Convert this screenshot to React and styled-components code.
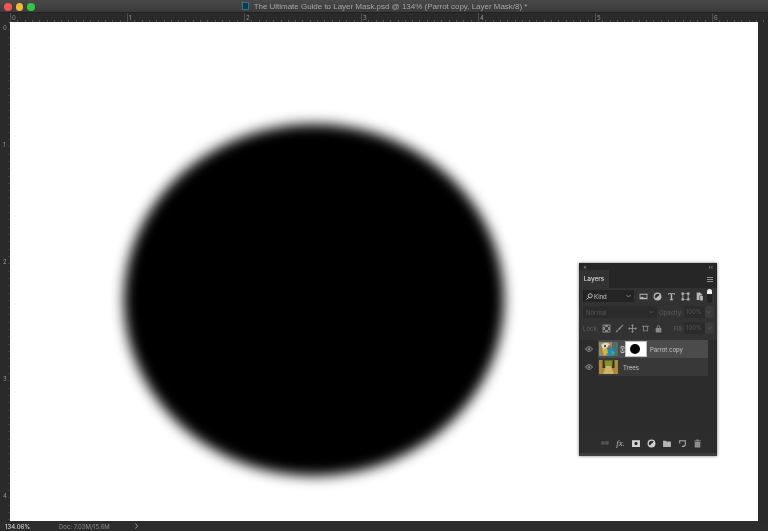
import React from "react";
import styled, { createGlobalStyle } from "styled-components";

const Global = createGlobalStyle`
  html, body { margin: 0; padding: 0; background: #262626; }
  body { font-family: "Inter", "Liberation Sans", sans-serif; overflow: hidden; }
  * { box-sizing: border-box; }
`;

const Window = styled.div`
  width: 768px;
  height: 531px;
  display: flex;
  flex-direction: column;
  background: #2a2a2a;
  filter: blur(0.45px);
  overflow: hidden;
`;

const TitleBar = styled.div`
  height: 13px;
  flex: none;
  position: relative;
  display: flex;
  align-items: center;
  justify-content: center;
  background: linear-gradient(#484848, #3a3a3a);
  border-bottom: 1px solid #222;
`;

const Lights = styled.div`
  position: absolute;
  left: 4px;
  top: 3px;
  display: flex;
  gap: 4px;
`;

const Light = styled.span`
  width: 7.5px;
  height: 7.5px;
  border-radius: 50%;
  background: ${(p) => p.$c};
`;

const Title = styled.div`
  display: flex;
  align-items: center;
  gap: 5px;
  margin-left: 1px;
  font-family: "Liberation Sans", sans-serif;
  font-size: 8px;
  letter-spacing: -0.02px;
  color: #a6a6a6;
  white-space: nowrap;
`;

const HRuler = styled.div`
  height: 9px;
  flex: none;
  display: flex;
  padding-left: 10px;
  background: #2a2a2a;
  overflow: hidden;
`;

const HSegment = styled.div`
  flex: none;
  width: 117px;
  height: 9px;
  padding: 1px 0 0 2px;
  font-size: 6px;
  line-height: 7px;
  color: #929292;
  background:
    linear-gradient(#4e4e4e, #4e4e4e) left bottom / 1px 9px no-repeat,
    repeating-linear-gradient(90deg, #555 0 1px, transparent 1px 7.31px) left bottom / 100% 2px no-repeat;
`;

const Middle = styled.div`
  flex: 1;
  min-height: 0;
  display: flex;
`;

const VRuler = styled.div`
  width: 10px;
  flex: none;
  display: flex;
  flex-direction: column;
  background: #2a2a2a;
  overflow: hidden;
`;

const VSegment = styled.div`
  flex: none;
  height: 117px;
  padding: 2px 0 0 3px;
  font-size: 6px;
  line-height: 7px;
  color: #929292;
  background: repeating-linear-gradient(180deg, #444 0 1px, transparent 1px 7.31px) right top / 2px 100% no-repeat;
`;

const Canvas = styled.div`
  position: relative;
  flex: 1;
  background: #ffffff;
  overflow: hidden;
`;

const Gutter = styled.div`
  width: 10px;
  flex: none;
  background: #2a2a2a;
`;

const Blob = styled.div`
  position: absolute;
  left: 114px;
  top: 102px;
  width: 380px;
  height: 352px;
  border-radius: 50%;
  background: #000;
  filter: blur(6.5px);
`;

const StatusBar = styled.div`
  height: 10px;
  flex: none;
  display: flex;
  align-items: center;
  padding-left: 5px;
  background: #2c2c2c;
  font-size: 6px;
  color: #8e8e8e;
`;

const Zoom = styled.span`
  width: 54px;
  font-weight: 500;
  color: #d4d4d4;
`;

const Doc = styled.span`
  width: 76px;
`;

const Panel = styled.div`
  position: absolute;
  left: 569px;
  top: 241px;
  width: 138px;
  height: 193px;
  display: flex;
  flex-direction: column;
  background: #323232;
  box-shadow: 0 0 3px rgba(0, 0, 0, 0.55);
`;

const PanelTop = styled.div`
  height: 7px;
  flex: none;
  display: flex;
  align-items: center;
  justify-content: space-between;
  padding: 0 4px;
  background: #262626;
  color: #9a9a9a;
  font-size: 6px;
  line-height: 7px;
`;

const TabBar = styled.div`
  height: 18px;
  flex: none;
  display: flex;
  align-items: center;
  justify-content: space-between;
  padding-right: 4px;
  background: #262626;
`;

const Tab = styled.div`
  width: 30px;
  height: 18px;
  display: flex;
  align-items: center;
  justify-content: center;
  background: #323232;
  color: #d6d6d6;
  font-size: 6.500px;
  font-weight: 500;
`;

const MenuBars = styled.div`
  width: 6px;
  height: 5px;
  background: repeating-linear-gradient(#8a8a8a 0 1px, transparent 1px 2px);
`;

const Row = styled.div`
  height: 16px;
  flex: none;
  display: flex;
  align-items: center;
  padding: 0 3px 0 4px;
  color: #5a5a5a;
  font-size: 6px;
`;

const Select = styled.div`
  height: 12px;
  width: ${(p) => p.$w}px;
  flex: none;
  display: flex;
  align-items: center;
  justify-content: space-between;
  padding: 0 3px;
  background: ${(p) => (p.$dim ? "#2b2b2b" : "#242424")};
  color: ${(p) => (p.$dim ? "#555555" : "#c4c4c4")};
  font-size: 6px;
`;

const KindLabel = styled.span`
  display: flex;
  align-items: center;
  gap: 1px;
`;

const FilterIcons = styled.div`
  display: flex;
  align-items: center;
  gap: 5px;
  margin-left: 5px;
`;

const Knob = styled.div`
  width: 5px;
  height: 14px;
  margin-left: 3px;
  border-radius: 3px;
  background: linear-gradient(#f0f0f0 0 5px, #242424 5px);
`;

const Field = styled.div`
  height: 12px;
  width: ${(p) => p.$w}px;
  margin-left: ${(p) => p.$ml || 0}px;
  flex: none;
  padding-left: 2px;
  line-height: 12px;
  background: #2b2b2b;
  color: #555555;
  font-size: 6px;
`;

const Spin = styled.div`
  height: 12px;
  width: 8px;
  flex: none;
  display: flex;
  align-items: center;
  justify-content: center;
  background: #3c3c3c;
`;

const Label = styled.span`
  margin-left: ${(p) => p.$ml || 0}px;
  color: #5e5e5e;
`;

const LockIcons = styled.div`
  display: flex;
  align-items: center;
  gap: 4px;
  margin-left: 4px;
`;

const List = styled.div`
  flex: 1;
  min-height: 0;
  display: flex;
  flex-direction: column;
  margin-top: 4px;
  background: #2c2c2c;
`;

const LayerRow = styled.div`
  height: 18px;
  flex: none;
  display: flex;
  align-items: center;
`;

const EyeCell = styled.div`
  width: 19px;
  flex: none;
  display: flex;
  align-items: center;
  justify-content: center;
`;

const LayerBody = styled.div`
  width: 110px;
  height: 18px;
  display: flex;
  align-items: center;
  padding-left: 1px;
  background: ${(p) => (p.$active ? "#4b4b4b" : "#383838")};
  color: #c6c6c6;
  font-size: 6px;
`;

const Thumb = styled.svg`
  width: 19px;
  height: 14px;
  flex: none;
`;

const Link = styled.svg`
  width: 5px;
  height: 9px;
  flex: none;
  margin: 0 1px 0 2px;
`;

const MaskThumb = styled.div`
  width: 20px;
  height: 14px;
  flex: none;
  display: flex;
  align-items: center;
  justify-content: center;
  background: #fff;
  outline: 1px solid #bdbdbd;
`;

const MaskDot = styled.div`
  width: 10px;
  height: 10px;
  margin-left: -3px;
  border-radius: 50%;
  background: #000;
`;

const LayerName = styled.span`
  margin-left: ${(p) => p.$ml}px;
  white-space: nowrap;
`;

const Footer = styled.div`
  height: 20px;
  flex: none;
  display: flex;
  align-items: center;
  justify-content: flex-end;
  gap: 6px;
  padding-right: 15px;
  background: #2d2d2d;
`;

const Fx = styled.span`
  font-family: "Liberation Serif", serif;
  font-style: italic;
  font-size: 9px;
  color: #bcbcbc;
`;

const PanelBase = styled.div`
  height: 3px;
  flex: none;
  background: #3c3c3c;
`;

const Ico = ({ children, w = 9, h = 9, c = "#b8b8b8" }) => (
  <svg width={w} height={h} viewBox="0 0 16 16" fill={c} stroke="none" style={{ flex: "none" }}>
    {children}
  </svg>
);

const Chevron = ({ c = "#a0a0a0" }) => (
  <svg width="5" height="4" viewBox="0 0 10 8" fill="none" stroke={c} strokeWidth="1.6">
    <path d="M1 2l4 4 4-4" />
  </svg>
);

const Eye = () => (
  <svg width="8" height="6" viewBox="0 0 16 12" fill="none" stroke="#a8a8a8" strokeWidth="1.6">
    <path d="M1 6c2-3 4.500-4.500 7-4.500S13 3 15 6c-2 3-4.500 4.500-7 4.500S3 9 1 6z" />
    <circle cx="8" cy="6" r="1.800" />
  </svg>
);

const ParrotThumb = () => (
  <Thumb viewBox="0 0 19 14">
    <rect width="19" height="14" fill="#8f8a6a" />
    <rect x="13" width="6" height="14" fill="#4f6f6a" />
    <path d="M2 3c3-3 7-3 9 0l-1 4-6 0z" fill="#e6dcb0" />
    <path d="M7 6c3-2 7-1 8 3 0 3-2 5-5 5-3-1-4-4-3-8z" fill="#1c8cc8" />
    <path d="M3 7l5-1 1 5-4 3z" fill="#e2b02c" />
    <path d="M9 3l3 1-2 3z" fill="#d8442c" />
    <path d="M12 9l4 1-2 4z" fill="#3ab57c" />
    <circle cx="6" cy="4" r="1" fill="#222" />
  </Thumb>
);

const TreesThumb = () => (
  <Thumb viewBox="0 0 19 14">
    <rect width="19" height="14" fill="#a8853a" />
    <path d="M2 0h15v8H2z" fill="#5f6a28" />
    <path d="M6 1h7v6H6z" fill="#86913c" />
    <path d="M7 6h5l3 8H4z" fill="#cdb268" />
    <path d="M0 0h3v14H0zM16 0h3v14h-3z" fill="#b08a3c" />
    <path d="M4 0h1l1 8H4zM14 0h1v8h-2z" fill="#3d3214" />
  </Thumb>
);

const HLABELS = ["0", "1", "2", "3", "4", "5", "6"];
const VLABELS = ["0", "1", "2", "3", "4"];

export default function App() {
  return (
    <>
      <Global />
      <Window>
        <TitleBar>
          <Lights>
            <Light $c="#f1564e" />
            <Light $c="#f5b82e" />
            <Light $c="#2fc840" />
          </Lights>
          <Title>
            <svg width="7" height="8" viewBox="0 0 7 8">
              <rect x="0.5" y="0.5" width="6" height="7" fill="#0f3a4a" stroke="#3a8ea8" strokeWidth="0.7" />
            </svg>
            The Ultimate Guide to Layer Mask.psd @ 134% (Parrot copy, Layer Mask/8) *
          </Title>
        </TitleBar>
        <HRuler>
          {HLABELS.map((l) => (
            <HSegment key={l}>{l}</HSegment>
          ))}
        </HRuler>
        <Middle>
          <VRuler>
            {VLABELS.map((l) => (
              <VSegment key={l}>{l}</VSegment>
            ))}
          </VRuler>
          <Canvas>
            <Blob />
            <Panel>
              <PanelTop>
                <span>×</span>
                <span>‹‹</span>
              </PanelTop>
              <TabBar>
                <Tab>Layers</Tab>
                <MenuBars />
              </TabBar>
              <Row>
                <Select $w={51}>
                  <KindLabel>
                    <svg width="7" height="7" viewBox="0 0 14 14" fill="none" stroke="#d0d0d0" strokeWidth="1.8">
                      <circle cx="8.500" cy="5.500" r="4" />
                      <path d="M5.500 8.500L1 13" />
                    </svg>
                    Kind
                  </KindLabel>
                  <Chevron />
                </Select>
                <FilterIcons>
                  <Ico>
                    <path d="M1 3h14v10H1zM2.500 5v5l3-2 3 2h5V5z" fillRule="evenodd" />
                  </Ico>
                  <Ico>
                    <path d="M8 1a7 7 0 110 14A7 7 0 018 1zm0 2a5 5 0 00-3.500 8.500L12 5A5 5 0 008 3z" fillRule="evenodd" />
                  </Ico>
                  <Ico>
                    <path d="M2 2h12v3h-1.500l-.5-1.300H9.300V13H11v1.500H5V13h1.700V3.700H4L3.500 5H2z" />
                  </Ico>
                  <Ico>
                    <path d="M1 1h4v1.500h6V1h4v4h-1.500v6H15v4h-4v-1.500H5V15H1v-4h1.500V5H1zM4 5v6h1v1.500h6V11h1V5h-1V3.500H5V5z" fillRule="evenodd" />
                  </Ico>
                  <Ico>
                    <path d="M3 1h6l4 4v1H8v8H3zM9 7h5v8H9z" />
                  </Ico>
                </FilterIcons>
                <Knob />
              </Row>
              <Row>
                <Select $w={74} $dim>
                  Normal
                  <Chevron c="#5a5a5a" />
                </Select>
                <Label $ml={2}>Opacity:</Label>
                <Field $w={21} $ml={1}>100%</Field>
                <Spin>
                  <Chevron c="#5a5a5a" />
                </Spin>
              </Row>
              <Row>
                <Label>Lock:</Label>
                <LockIcons>
                  <Ico c="#8a8a8a">
                    <path d="M1 1h14v14H1zM2.500 2.500v3h3v-3zm3 3v5h5v-5zm5 0h3v-3h-3zm0 5v3h3v-3zm-5 0h-3v3h3z" fillRule="evenodd" />
                  </Ico>
                  <Ico c="#8a8a8a">
                    <path d="M14 1l1 1-8 9-2-2zM4 10l2 2c-1 2-3 3-5 3 1-1 1-4 3-5z" />
                  </Ico>
                  <Ico c="#8a8a8a">
                    <path d="M8 0l3 3H9v4h4V5l3 3-3 3v-2H9v4h2l-3 3-3-3h2V9H3v2L0 8l3-3v2h4V3H5z" />
                  </Ico>
                  <Ico c="#8a8a8a">
                    <path d="M2 3h12v2h-1.500v8H3.500V5H2zM5 5v6.500h6V5z" fillRule="evenodd" />
                  </Ico>
                  <Ico c="#8a8a8a">
                    <path d="M5 7V5a3 3 0 016 0v2h2v8H3V7zm1.500 0h3V5a1.500 1.500 0 00-3 0z" fillRule="evenodd" />
                  </Ico>
                </LockIcons>
                <Label $ml={10}>Fill:</Label>
                <Field $w={21} $ml={1}>100%</Field>
                <Spin>
                  <Chevron c="#5a5a5a" />
                </Spin>
              </Row>
              <List>
                <LayerRow>
                  <EyeCell>
                    <Eye />
                  </EyeCell>
                  <LayerBody $active>
                    <ParrotThumb />
                    <Link viewBox="0 0 5 9">
                      <path d="M1 4V1.500h3V4M1 5v2.500h3V5M2.500 3v3" fill="none" stroke="#cfcfcf" strokeWidth="0.8" />
                    </Link>
                    <MaskThumb>
                      <MaskDot />
                    </MaskThumb>
                    <LayerName $ml={4}>Parrot copy</LayerName>
                  </LayerBody>
                </LayerRow>
                <LayerRow>
                  <EyeCell>
                    <Eye />
                  </EyeCell>
                  <LayerBody>
                    <TreesThumb />
                    <LayerName $ml={5}>Trees</LayerName>
                  </LayerBody>
                </LayerRow>
              </List>
              <Footer>
                <Ico c="#6a6a6a" w={10} h={8}>
                  <path d="M1 5h6v2H3v2h4v2H1zM9 5h6v6H9V9h4V7H9zM5 7.300h6v1.400H5z" />
                </Ico>
                <Fx>fx.</Fx>
                <Ico w={10} h={9} c="#d4d4d4">
                  <path d="M1 2h14v12H1zM8 5a3 3 0 100 6 3 3 0 000-6z" fillRule="evenodd" />
                </Ico>
                <Ico c="#d0d0d0">
                  <path d="M8 1a7 7 0 110 14A7 7 0 018 1zm0 2a5 5 0 00-3.500 8.500L12 5A5 5 0 008 3z" fillRule="evenodd" />
                </Ico>
                <Ico c="#b4b4b4" w={10} h={9}>
                  <path d="M1 3h5l1 1.500h8V14H1z" />
                </Ico>
                <Ico c="#a8a8a8">
                  <path d="M2 2h12v9l-3 3H7v-2h3l2-2V4H4v4H2z" />
                </Ico>
                <Ico c="#8e8e8e">
                  <path d="M6 1h4v1.500h4V4H2V2.500h4zM3 5h10v10H3z" />
                </Ico>
              </Footer>
              <PanelBase />
            </Panel>
          </Canvas>
          <Gutter />
        </Middle>
        <StatusBar>
          <Zoom>134.06%</Zoom>
          <Doc>Doc: 7.03M/15.6M</Doc>
          <svg width="3" height="6" viewBox="0 0 6 12" fill="none" stroke="#b0b0b0" strokeWidth="1.500">
            <path d="M1 1l4 5-4 5" />
          </svg>
        </StatusBar>
      </Window>
    </>
  );
}
